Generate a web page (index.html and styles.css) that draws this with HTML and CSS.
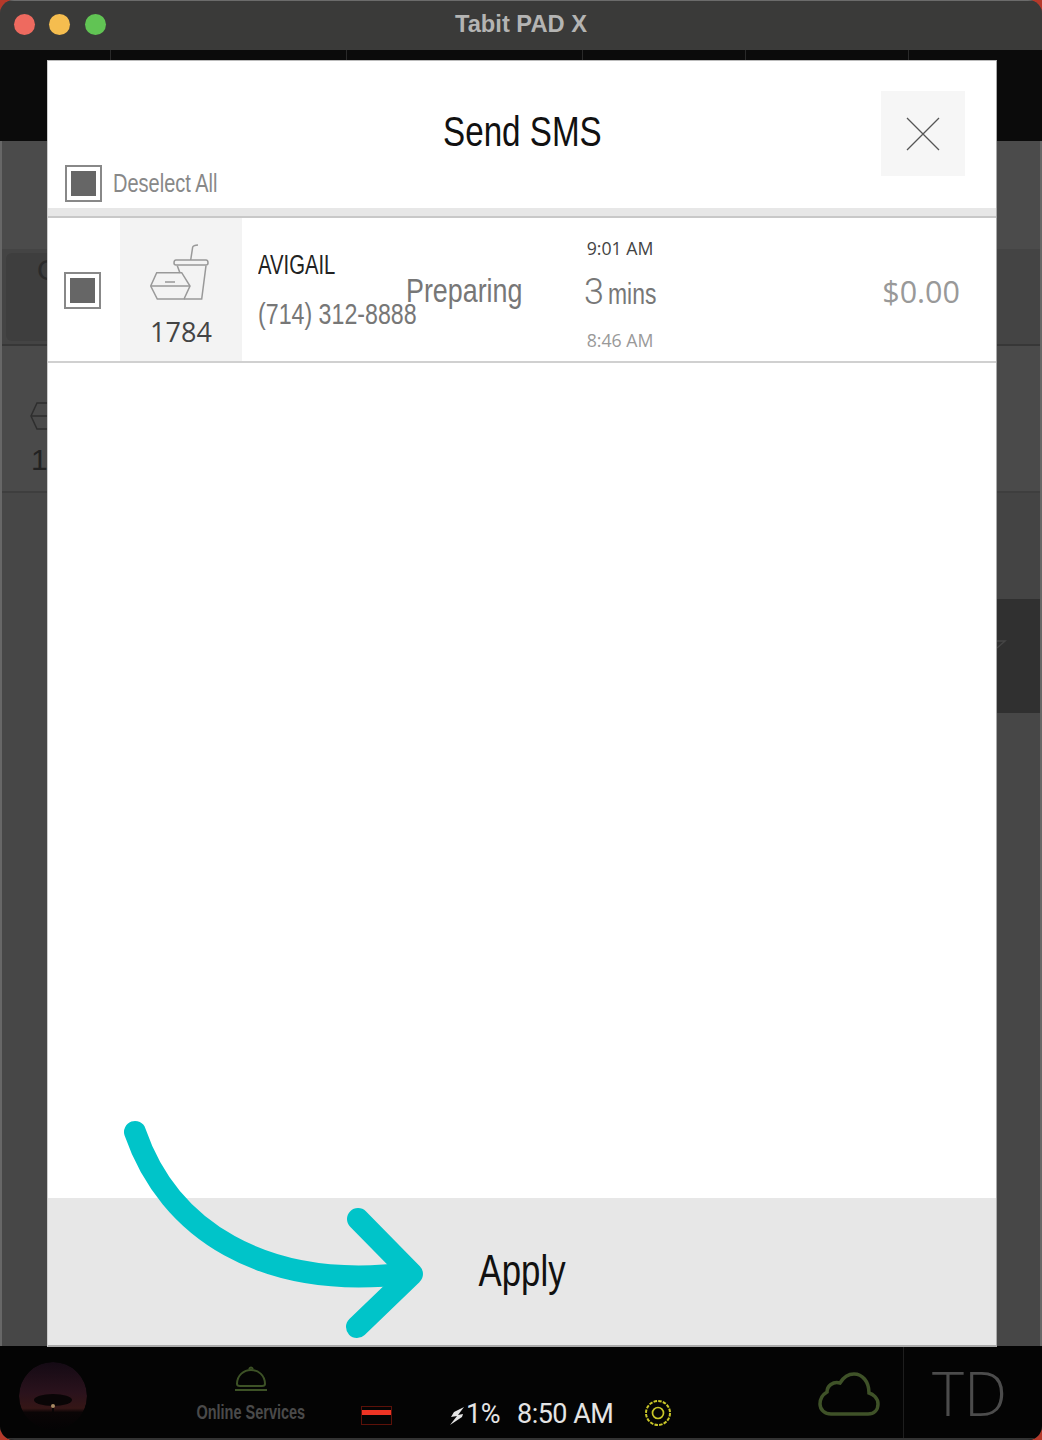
FILE: index.html
```html
<!DOCTYPE html>
<html lang="en">
<head>
    <meta charset="UTF-8">
    <meta name="viewport" content="width=device-width, initial-scale=1.0">
    <title>Tabit PAD X</title>
    <link rel="stylesheet" href="styles.css">
</head>
<body>
    <div class="window">
        <div class="titlebar">
            <div class="lights">
                <span class="light red"></span>
                <span class="light yellow"></span>
                <span class="light green"></span>
            </div>
            <div class="window-title">Tabit PAD X</div>
        </div>

        <div class="app-top">
            <div class="tab tab-wide"></div>
            <div class="tab tab-wide"></div>
            <div class="tab"></div>
            <div class="tab"></div>
            <div class="tab"></div>
        </div>

        <!-- dimmed list behind the dialog -->
        <div class="app-body">
            <div class="bg-row bg-head"></div>
            <div class="bg-row bg-dark"><div class="bg-card"></div><span class="bg-letter">O</span></div>
            <div class="bg-row bg-order">
                <svg class="bg-icon" width="30" height="30" viewBox="0 0 30 30" fill="none" stroke="#2e2e2e" stroke-width="1.5">
                    <path d="M28 2 H7 L1 15 L7 28 H28 M2 15 H28"/>
                </svg>
                <span class="bg-num">1</span>
            </div>
            <div class="bg-lower">
                <div class="side-plain"></div>
                <div class="side-selected">
                    <svg width="16" height="12" viewBox="0 0 16 12" fill="none" stroke="#454545" stroke-width="1.5">
                        <path d="M0 2 H10 L2 9"/>
                    </svg>
                </div>
            </div>
        </div>

        <div class="bottombar">
            <div class="avatar">
                <svg width="68" height="68" viewBox="0 0 68 68">
                    <defs>
                        <linearGradient id="sky" x1="0" y1="0" x2="0" y2="1">
                            <stop offset="0" stop-color="#140a14"/>
                            <stop offset="0.45" stop-color="#2a121c"/>
                            <stop offset="0.68" stop-color="#351616"/>
                            <stop offset="0.74" stop-color="#0a0506"/>
                            <stop offset="1" stop-color="#040304"/>
                        </linearGradient>
                    </defs>
                    <circle cx="34" cy="34" r="34" fill="url(#sky)"/>
                    <ellipse cx="34" cy="38" rx="19" ry="6" fill="#090506"/>
                    <path d="M33 40 H35 V50 H33 Z" fill="#090506"/>
                    <circle cx="34" cy="44" r="2" fill="#a88a64"/>
                </svg>
            </div>
            <div class="online">
                <svg width="34" height="28" viewBox="0 0 34 28" fill="none" stroke="#3d5226" stroke-width="2">
                    <path d="M3 20 C3 11 10 6 17 6 C24 6 31 11 31 20 Q31 22 28 22 H6 Q3 22 3 20 Z"/>
                    <path d="M15 5 Q17 2 19 5"/>
                    <path d="M1 26 H33"/>
                </svg>
                <span class="online-label">Online Services</span>
            </div>
            <div class="printer"><div class="printer-band"></div></div>
            <div class="status">
                <svg class="bolt" width="15" height="18" viewBox="0 0 15 18" fill="#e4e4e4">
                    <path d="M14 0 L4 5 L1 10 L7 9 L0 18 L12 10 L13 7 L8 8 Z"/>
                </svg>
                <span class="battery">1%</span>
                <span class="clock">8:50 AM</span>
            </div>
            <svg class="gear" width="28" height="28" viewBox="0 0 28 28" fill="none" stroke="#c9c628">
                <circle cx="14" cy="14" r="12" stroke-width="2" stroke-dasharray="3.5 1.2"/>
                <circle cx="14" cy="14" r="5.5" stroke-width="1.7"/>
            </svg>
            <svg class="cloud" width="62" height="46" viewBox="0 0 62 46" fill="none" stroke="#3f5228" stroke-width="3.5">
                <path d="M13 43 H50 C56 43 60 39 60 33 C60 27 55 23 51 22 C51 10 44 3 36 3 C29 3 25 7 22 12 C15 10 9 15 9 21 C4 24 2 28 2 33 C2 39 7 43 13 43 Z"/>
            </svg>
            <div class="initials">TD</div>
        </div>

        <div class="modal">
            <div class="modal-header">
                <h1 class="modal-title"><span class="narrow">Send SMS</span></h1>
                <button class="close-btn">
                    <svg width="36" height="36" viewBox="0 0 36 36" stroke="#555" stroke-width="1.3">
                        <path d="M2 2 L34 34 M34 2 L2 34"/>
                    </svg>
                </button>
                <div class="select-all">
                    <span class="check"><span class="check-fill"></span></span>
                    <span class="select-label narrow-left">Deselect All</span>
                </div>
            </div>
            <div class="modal-divider"></div>

            <div class="order-row">
                <div class="row-check"><span class="check"><span class="check-fill"></span></span></div>
                <div class="order-type">
                    <svg width="62" height="56" viewBox="0 0 62 56" fill="none" stroke="#999" stroke-width="1.5">
                        <path d="M40.7 16 L42.7 3 Q43.5 1.2 48 1"/>
                        <path d="M26 16 H56 Q58 16 58 19 Q58 21 56 21 H26 Q24 21 24 19 Q24 16 26 16 Z"/>
                        <path d="M56 21.7 L51.7 55 H34"/>
                        <path d="M27.3 21.7 L30 29"/>
                        <path d="M6.7 28.7 H31.7 L40 42 L34 55 H7.3 L0.7 42 Z"/>
                        <path d="M1 42 H40"/>
                        <path d="M15 38 H25"/>
                    </svg>
                    <span class="order-num">1784</span>
                </div>
                <div class="customer">
                    <div class="customer-name"><span class="narrow-left name-text">AVIGAIL</span></div>
                    <div class="customer-phone"><span class="narrow-left phone-text">(714) 312-8888</span></div>
                </div>
                <div class="order-status"><span class="narrow-left">Preparing</span></div>
                <div class="times">
                    <div class="time-due">9:01 AM</div>
                    <div class="time-left">
                        <span class="time-big">3</span>
                        <span class="time-unit"><span class="narrow-left">mins</span></span>
                    </div>
                    <div class="time-placed">8:46 AM</div>
                </div>
                <div class="amount">$0.00</div>
            </div>

            <div class="modal-spacer"></div>
            <button class="apply-btn"><span class="narrow">Apply</span></button>
        </div>

        <svg class="arrow" width="1042" height="1440" viewBox="0 0 1042 1440" fill="none" stroke="#00c4c9" stroke-width="22" stroke-linecap="round" stroke-linejoin="round">
            <path d="M135 1132 C168 1228 262 1292 410 1273"/>
            <path d="M358 1219 L412 1274 L357 1327"/>
        </svg>
    </div>
</body>
</html>
```

FILE: styles.css
```css
* {
    margin: 0;
    padding: 0;
    box-sizing: border-box;
}

body {
    width: 1042px;
    height: 1440px;
    background: #b5392a;
    overflow: hidden;
    font-family: "Liberation Sans", sans-serif;
}

/* no condensed face is available, so squeeze the regular one */
.narrow,
.narrow-left {
    display: inline-block;
    white-space: nowrap;
    transform: scaleX(0.79);
}

.narrow-left {
    transform-origin: left center;
}

.window {
    position: relative;
    width: 1042px;
    height: 1440px;
    display: flex;
    flex-direction: column;
    border-radius: 14px;
    overflow: hidden;
    background: #4a4a4a;
}

/* title bar */
.titlebar {
    position: relative;
    height: 50px;
    flex-shrink: 0;
    background: #3a3a39;
    border-top: 1px solid #6b6b6b;
    display: flex;
    align-items: center;
    justify-content: center;
}

.lights {
    position: absolute;
    left: 14px;
    top: 13px;
    display: flex;
    gap: 14.3px;
}

.light {
    width: 21px;
    height: 21px;
    border-radius: 50%;
}

.light.red { background: #ee6a5f; }
.light.yellow { background: #f5bd4f; }
.light.green { background: #61c454; }

.window-title {
    font-size: 23.7px;
    font-weight: 700;
    color: #b4b4b3;
    margin-top: -3px;
}

.app-top {
    height: 91px;
    flex-shrink: 0;
    background: #0b0b0b;
    display: flex;
    padding-left: 110px;
}

.tab {
    width: 163px;
    flex-shrink: 0;
    height: 12px;
    border-left: 1px solid #2a2a2a;
}

.tab-wide {
    width: 236px;
}

/* dimmed content behind the modal */
.app-body {
    flex: 1;
    display: flex;
    flex-direction: column;
    border-left: 2px solid #676767;
    border-right: 2px solid #676767;
}

.bg-row {
    position: relative;
    overflow: hidden;
    flex-shrink: 0;
}

.bg-head {
    height: 108px;
    background: #4b4b4b;
}

.bg-dark {
    height: 97px;
    background: #444;
    border-bottom: 2px solid #373737;
}

.bg-card {
    position: absolute;
    left: 4px;
    top: 4px;
    width: 300px;
    height: 88px;
    background: #3e3e3e;
    border-radius: 6px;
}

.bg-letter {
    position: absolute;
    left: 35px;
    top: 4px;
    font-size: 30px;
    color: #2a2a2a;
}

.bg-order {
    height: 147px;
    background: #4a4a4a;
    border-bottom: 2px solid #3e3e3e;
}

.bg-icon {
    position: absolute;
    left: 28px;
    top: 55px;
}

.bg-num {
    position: absolute;
    left: 29px;
    top: 97px;
    font-size: 30px;
    color: #222;
}

.bg-lower {
    flex: 1;
    background: #474747;
    display: flex;
    flex-direction: column;
    align-items: flex-end;
}

.side-plain {
    width: 60px;
    height: 106px;
    background: #444;
}

.side-selected {
    width: 60px;
    height: 114px;
    background: #303030;
    padding: 38px 0 0 15px;
}

/* bottom bar */
.bottombar {
    height: 94px;
    flex-shrink: 0;
    background: #040404;
    border-bottom: 2px solid #333;
    display: flex;
    align-items: flex-start;
    position: relative;
}

.bottombar > * {
    flex-shrink: 0;
}

.avatar {
    width: 68px;
    height: 68px;
    margin: 16px 0 0 19px;
    border-radius: 50%;
    overflow: hidden;
}

.online {
    width: 110px;
    margin: 18px 0 0 109px;
    display: flex;
    flex-direction: column;
    align-items: center;
    gap: 8px;
}

.online-label {
    display: inline-block;
    font-size: 21px;
    font-weight: 700;
    white-space: nowrap;
    color: #4a4a4a;
    transform: scaleX(0.69);
}

.printer {
    width: 31px;
    height: 19px;
    margin: 60px 0 0 55px;
    border: 1px solid #5c1109;
    padding-top: 3px;
}

.printer-band {
    height: 5px;
    background: #ee3424;
}

.status {
    width: 194px;
    margin: 52px 0 0 58px;
    display: flex;
    align-items: center;
    color: #e4e4e4;
    font-family: Roboto, sans-serif;
    font-size: 27px;
    letter-spacing: -0.5px;
    white-space: nowrap;
}

.bolt {
    margin: 3px 1px 0 0;
}

.clock {
    margin-left: 17px;
}

.gear {
    margin-top: 53px;
}

.cloud {
    margin: 25px 23px 0 auto;
}

.initials {
    height: 92px;
    width: 139px;
    border-left: 1px solid #1e1e1e;
    padding: 5px 0 0 28px;
    font-family: "Open Sans", sans-serif;
    font-size: 61px;
    font-weight: 300;
    color: #4c4c4c;
}

/* dialog */
.modal {
    position: absolute;
    left: 47px;
    top: 60px;
    width: 950px;
    height: 1287px;
    background: #fff;
    display: flex;
    flex-direction: column;
    border: 1px solid #aaa;
    border-left-color: #ccc;
    border-top-color: #bbb;
}

.modal-header {
    position: relative;
    height: 147px;
    flex-shrink: 0;
}

.modal-title {
    padding-top: 48px;
    text-align: center;
    font-size: 42px;
    font-weight: 400;
    line-height: 46px;
    color: #111;
}

.close-btn {
    position: absolute;
    right: 31px;
    top: 30px;
    width: 84px;
    height: 85px;
    border: none;
    background: #f6f6f6;
    display: flex;
    align-items: center;
    justify-content: center;
}

.select-all {
    position: absolute;
    left: 17px;
    top: 104px;
    display: flex;
    align-items: center;
    gap: 11px;
}

.check {
    display: flex;
    align-items: center;
    justify-content: center;
    width: 37px;
    height: 37px;
    border: 2px solid #888;
    background: #fff;
}

.check-fill {
    width: 25px;
    height: 25px;
    background: #666;
}

.select-label {
    font-size: 25px;
    color: #888;
    transform: scaleX(0.8);
}

.modal-divider {
    height: 10px;
    flex-shrink: 0;
    background: #e7e7e7;
    border-bottom: 2px solid #c8c8c8;
}

.order-row {
    height: 145px;
    flex-shrink: 0;
    display: flex;
    align-items: stretch;
    border-bottom: 2px solid #d0d0d0;
}

.row-check {
    width: 72px;
    display: flex;
    align-items: center;
    padding: 2px 0 0 16px;
}

.order-type {
    width: 122px;
    background: #f3f3f3;
    display: flex;
    flex-direction: column;
    align-items: center;
    padding-top: 26px;
}

.order-num {
    margin-top: 13px;
    font-family: "Open Sans", sans-serif;
    font-size: 27px;
    color: #444;
}

.customer {
    width: 164px;
    padding: 29px 0 0 16px;
    white-space: nowrap;
}

.customer-name {
    font-size: 27px;
    line-height: 36px;
    color: #222;
}

.name-text {
    transform: scaleX(0.75);
}

.customer-phone {
    margin-top: 13px;
    font-size: 29px;
    line-height: 36px;
    color: #777;
}

.phone-text {
    transform: scaleX(0.8);
}

.order-status {
    width: 140px;
    padding-top: 51px;
    font-size: 34px;
    line-height: 42px;
    color: #777;
}

.times {
    width: 148px;
    padding-top: 18px;
    text-align: center;
    color: #777;
}

.time-due,
.time-placed {
    font-family: "Open Sans", sans-serif;
    font-size: 17.7px;
    line-height: 24px;
}

.time-due {
    color: #444;
}

.time-placed {
    color: #999;
}

.time-left {
    height: 68px;
    display: flex;
    justify-content: center;
    align-items: baseline;
    gap: 8px;
    line-height: 68px;
    margin-top: -2px;
    margin-bottom: 2px;
    color: #777;
}

.time-big {
    width: 16px;
    font-family: Roboto, sans-serif;
    font-weight: 300;
    font-size: 36px;
}

.time-unit {
    width: 48px;
    text-align: left;
    font-size: 29px;
}

.amount {
    margin-left: auto;
    padding: 53px 36px 0 0;
    font-family: "Open Sans", sans-serif;
    font-size: 30.5px;
    line-height: 40px;
    color: #999;
}

.modal-spacer {
    flex: 1;
}

.apply-btn {
    height: 148px;
    flex-shrink: 0;
    border: none;
    border-bottom: 1px solid #aaa;
    background: #e7e7e7;
    font-family: inherit;
    font-size: 44px;
    line-height: 48px;
    padding-bottom: 2px;
    color: #111;
}

.arrow {
    position: absolute;
    left: 0;
    top: 0;
    pointer-events: none;
}
```
